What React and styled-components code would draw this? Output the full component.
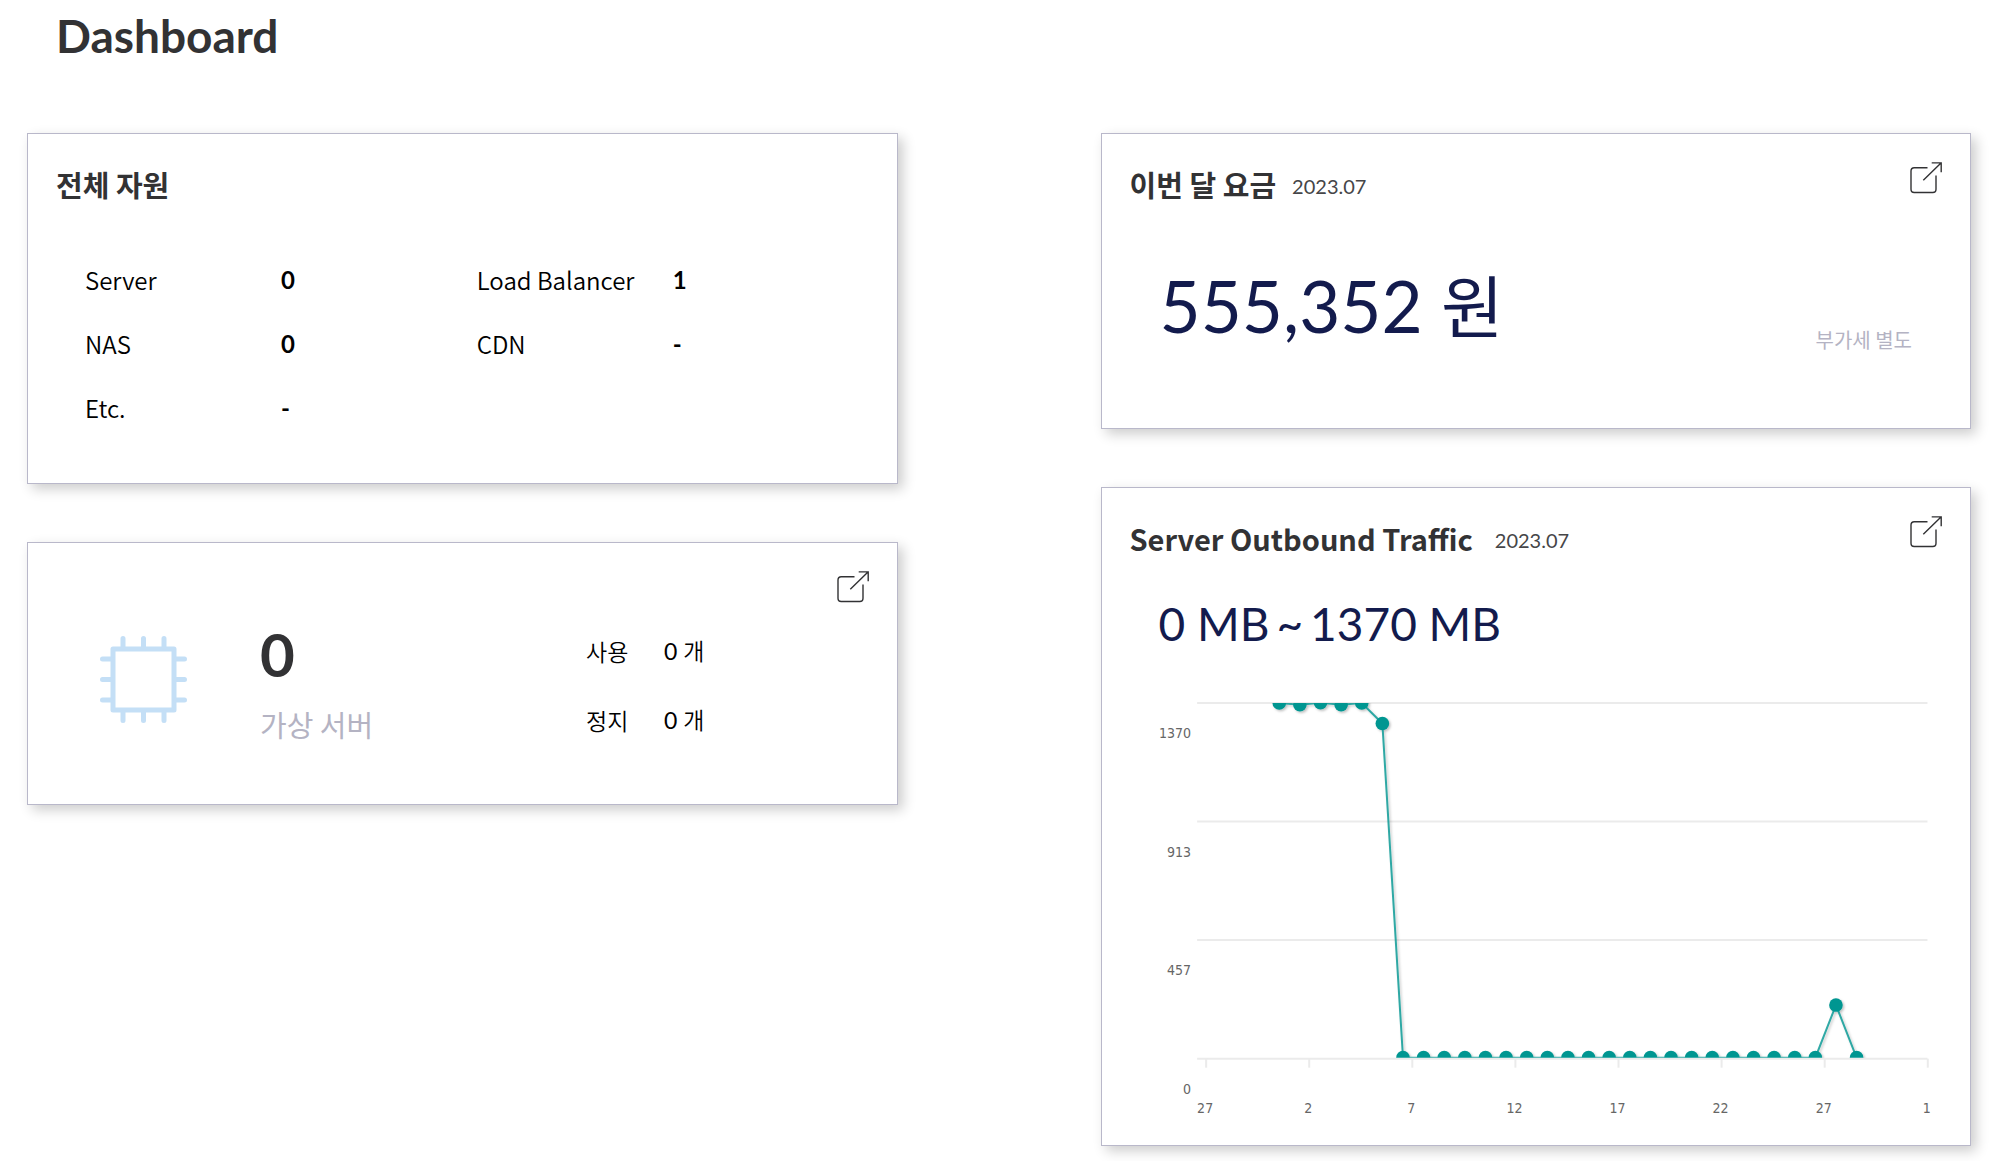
import React from "react";
import styled, { createGlobalStyle } from "styled-components";

const GlobalStyle = createGlobalStyle`
  * { box-sizing: border-box; }
  body {
    margin: 0;
    background: #fff;
    color: #000;
    font-family: "Noto Sans CJK KR", "Noto Sans", sans-serif;
    font-size: 24px;
  }
  h1, h2, p, dl, dt, dd { margin: 0; }
`;

const latin = `Lato, "Noto Sans CJK KR", sans-serif`;
const demiLight = `"Noto Sans CJK KR DemiLight", "Noto Sans CJK KR", sans-serif`;

const Page = styled.main`
  padding: 8px 29px 16px 27px;
`;

const PageTitle = styled.h1`
  padding-left: 29px;
  margin-bottom: 69px;
  font: 700 46px/56px ${latin};
  color: #323234;
`;

const Board = styled.div`
  display: grid;
  grid-template-columns: 1fr 1fr;
  column-gap: 203px;
  align-items: start;
`;

const Column = styled.div`
  display: grid;
  gap: 58px;
`;

const Card = styled.section`
  padding: 28px;
  padding-bottom: ${(p) => p.$bottom}px;
  border: 1px solid #b9b8ca;
  background: #fff;
  box-shadow: 5px 5px 12px rgba(0, 0, 0, 0.2);
`;

const CardHeader = styled.header`
  display: flex;
  align-items: flex-start;
  justify-content: space-between;
`;

const Heading = styled.div`
  display: flex;
  align-items: center;
  gap: ${(p) => p.$gap || 16}px;
`;

const CardTitle = styled.h2`
  font-size: 29px;
  line-height: 44px;
  font-weight: 700;
  color: #323234;
`;

const Period = styled.span`
  padding-top: 3px;
  font: 400 20px/24px ${latin};
  color: #464648;
`;

const OpenLink = styled.a`
  display: block;
  height: 32px;
  margin-left: auto;
  color: #323234;
`;

const Resources = styled.dl`
  display: grid;
  grid-template-columns: repeat(4, 1fr);
  grid-auto-rows: 64px;
  align-items: center;
  padding: 42px 0 0 29px;
`;

const Name = styled.dt`
  font: 300 24px/32px ${demiLight};
  white-space: nowrap;
`;

const Value = styled.dd`
  font: 700 24px/32px ${latin};
`;

const ServerBody = styled.div`
  display: flex;
  align-items: center;
  padding: 15px 0 0 44px;
`;

const ServerTotal = styled.div`
  width: 326px;
  margin-left: 73px;
`;

const Total = styled.p`
  font: 700 60px/72px ${latin};
  color: #323234;
`;

const Caption = styled.p`
  margin-top: 10px;
  font-size: 29px;
  line-height: 48px;
  color: #b4b3c3;
`;

const States = styled.dl`
  display: grid;
  grid-template-columns: 78px auto;
  row-gap: 37px;
  padding-top: 4px;
`;

const State = styled.dt`
  font: 300 23px/32px ${demiLight};
`;

const Count = styled.dd`
  font: 400 23px/32px Lato, ${demiLight};
`;

const Bill = styled.div`
  display: flex;
  justify-content: space-between;
  align-items: flex-end;
  padding: 48px 30px 0 30px;
`;

const Price = styled.p`
  font: 400 71px/104px ${latin};
  color: #131b4d;
`;

const Unit = styled.span`
  font-size: 68px;
  line-height: 1;
`;

const TaxNote = styled.p`
  font-size: 20px;
  line-height: 32px;
  margin-bottom: 2px;
  color: #b4b3c3;
`;

const Range = styled.p`
  display: flex;
  gap: 7px;
  padding: 28px 0 0 29px;
  font: 400 46px/72px ${latin};
  color: #131b4d;
`;

const Chart = styled.svg`
  display: block;
  width: 100%;
  height: auto;
  margin-top: 42px;

  text {
    font: 14px "DejaVu Sans Condensed", "DejaVu Sans", sans-serif;
    font-stretch: condensed;
    fill: #666;
  }
`;

function OpenIcon() {
  return (
    <svg width="32" height="32" viewBox="0 0 32 32" fill="none" stroke="currentColor" strokeWidth="1.4">
      <path d="M17.5 5.7H4.2Q1 5.7 1 8.9V27.3Q1 30.5 4.2 30.5H22.8Q26 30.5 26 27.3V13.5" />
      <path d="M13.3 18.2 31 .9M21.7.9H31.2V10.2" />
    </svg>
  );
}

const ChipSvg = styled.svg`
  margin-bottom: 8px;
`;

function ChipIcon() {
  const pins = [23, 43.5, 64];
  return (
    <ChipSvg width="87" height="87" viewBox="0 0 87 87" fill="none" stroke="#c4dff6" strokeWidth="5" strokeLinecap="round">
      <rect x="13" y="13" width="61" height="61" strokeLinejoin="round" />
      {pins.map((p) => (
        <path key={p} d={`M${p} 2.5V11M${p} 76V84.5M2.5 ${p}H11M76 ${p}H84.5`} />
      ))}
    </ChipSvg>
  );
}

function CardLink({ label }) {
  return (
    <OpenLink href="#" aria-label={label}>
      <OpenIcon />
    </OpenLink>
  );
}

const resources = [
  ["Server", "0"],
  ["Load Balancer", "1"],
  ["NAS", "0"],
  ["CDN", "-"],
  ["Etc.", "-"],
];

const DAY = 20.58;
const FLOOR = 355;
const gridLines = [1, 119.3, 237.6, FLOOR + 1];
const yLabels = ["1370", "913", "457", "0"];
const xLabels = ["27", "2", "7", "12", "17", "22", "27", "1"];
const heights = [1, 2.7, 0.7, 2.7, 1, 21.5, ...Array(21).fill(FLOOR), 302.5, FLOOR];
const points = heights.map((y, i) => [149 + i * DAY, y]);

function TrafficChart() {
  return (
    <Chart viewBox="0 0 811 414" role="img" aria-label="Server Outbound Traffic">
      <defs>
        <clipPath id="plot">
          <rect x="66" y="1" width="731" height={FLOOR - 1} />
        </clipPath>
        <filter id="dot-shadow" x="-10%" y="-10%" width="120%" height="120%">
          <feDropShadow dx="1.5" dy="1.5" stdDeviation="1.2" floodOpacity="0.25" />
        </filter>
      </defs>
      <g stroke="#ebebeb" strokeWidth="2">
        {gridLines.map((y) => (
          <path key={y} d={`M67 ${y}H796`} />
        ))}
        {xLabels.map((_, i) => (
          <path key={i} d={`M${76 + i * DAY * 5} ${FLOOR + 1}v9`} />
        ))}
      </g>
      <g clipPath="url(#plot)">
        <g filter="url(#dot-shadow)">
          <polyline
            points={points.map((p) => p.join(",")).join(" ")}
            fill="none"
            stroke="#009691"
            strokeOpacity="0.8"
            strokeWidth="2"
          />
          {points.map(([x, y]) => (
            <circle key={x} cx={x} cy={y} r="6.8" fill="#009691" />
          ))}
        </g>
      </g>
      {yLabels.map((t, i) => (
        <text key={t} x="61" y={36 + i * 118.3} textAnchor="end">
          {t}
        </text>
      ))}
      {xLabels.map((t, i) => (
        <text key={i} x={75 + i * DAY * 5} y="410" textAnchor="middle">
          {t}
        </text>
      ))}
    </Chart>
  );
}

export default function App() {
  return (
    <>
      <GlobalStyle />
      <Page>
        <PageTitle>Dashboard</PageTitle>
        <Board>
          <Column>
            <Card $bottom={43}>
              <CardHeader>
                <CardTitle>전체 자원</CardTitle>
              </CardHeader>
              <Resources>
                {resources.map(([name, value]) => (
                  <React.Fragment key={name}>
                    <Name>{name}</Name>
                    <Value>{value}</Value>
                  </React.Fragment>
                ))}
              </Resources>
            </Card>
            <Card $bottom={56}>
              <CardHeader>
                <CardLink label="가상 서버" />
              </CardHeader>
              <ServerBody>
                <ChipIcon />
                <ServerTotal>
                  <Total>0</Total>
                  <Caption>가상 서버</Caption>
                </ServerTotal>
                <States>
                  <State>사용</State>
                  <Count>0 개</Count>
                  <State>정지</State>
                  <Count>0 개</Count>
                </States>
              </ServerBody>
            </Card>
          </Column>
          <Column>
            <Card $bottom={70}>
              <CardHeader>
                <Heading>
                  <CardTitle>이번 달 요금</CardTitle>
                  <Period>2023.07</Period>
                </Heading>
                <CardLink label="이번 달 요금" />
              </CardHeader>
              <Bill>
                <Price>
                  555,352 <Unit>원</Unit>
                </Price>
                <TaxNote>부가세 별도</TaxNote>
              </Bill>
            </Card>
            <Card $bottom={28}>
              <CardHeader>
                <Heading $gap={22}>
                  <CardTitle>Server Outbound Traffic</CardTitle>
                  <Period>2023.07</Period>
                </Heading>
                <CardLink label="Server Outbound Traffic" />
              </CardHeader>
              <Range>
                <span>0 MB</span>
                <span>~</span>
                <span>1370 MB</span>
              </Range>
              <TrafficChart />
            </Card>
          </Column>
        </Board>
      </Page>
    </>
  );
}
